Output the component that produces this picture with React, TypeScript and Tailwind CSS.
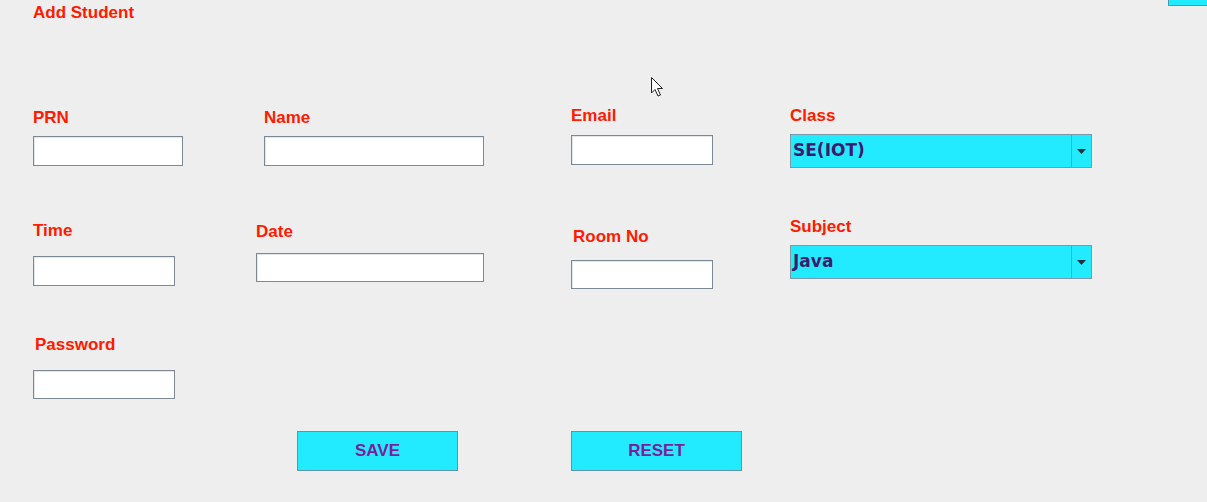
import React from "react";

function Field({
  label,
  colClass,
  labelClass,
  inputClass,
}: {
  label: string;
  colClass: string;
  labelClass: string;
  inputClass: string;
}) {
  return (
    <div className={`flex flex-col shrink-0 ${colClass}`}>
      <div className={`pt-[1px] text-[17px] leading-[20px] font-bold text-[#ff1a00] whitespace-nowrap ${labelClass}`}>{label}</div>
      <div className={`bg-white border border-[#7d8994] shadow-[inset_1px_1px_0_#e3e6e9] ${inputClass}`} />
    </div>
  );
}

function Combo({ label, value, colClass, labelClass }: { label: string; value: string; colClass: string; labelClass: string }) {
  return (
    <div className={`flex flex-col shrink-0 w-[302px] ${colClass}`}>
      <div className={`pt-[1px] text-[17px] leading-[20px] font-bold text-[#ff1a00] ${labelClass}`}>{label}</div>
      <div className="flex h-[34px] w-[302px] border border-[#7a9aa8] bg-[#22ebff]">
        <div
          className="flex-1 flex items-center pl-[2px] text-[17px] font-bold text-[#3d1a6e]"
          style={{ fontFamily: '"DejaVu Sans", Verdana, sans-serif' }}
        >
          {value}
        </div>
        <div className="w-[20px] border-l border-[#7a9aa8] flex items-center justify-center">
          <svg width="9" height="5" viewBox="0 0 9 5">
            <path d="M0 0 H9 L4.5 5 Z" fill="#233040" />
          </svg>
        </div>
      </div>
    </div>
  );
}

export default function App() {
  return (
    <div
      className="relative w-[1207px] h-[502px] overflow-hidden bg-[#eeeeee]"
      style={{ fontFamily: '"Liberation Sans", Arial, sans-serif' }}
    >
      <div className="absolute right-0 top-0 w-[39px] h-[6px] bg-[#22ebff] border-l border-b border-[#4a9ab0]" />

      <div className="pt-[3px] pl-[33px] text-[17px] leading-[20px] font-bold text-[#ff1a00]">Add Student</div>

      {/* Row 1 */}
      <div className="flex items-start mt-[82px]">
        <Field label="PRN" colClass="ml-[33px] mt-[2px] w-[150px] gap-[8px]" labelClass="" inputClass="w-[150px] h-[30px]" />
        <Field label="Name" colClass="ml-[81px] mt-[2px] w-[220px] gap-[8px]" labelClass="" inputClass="w-[220px] h-[30px]" />
        <Field label="Email" colClass="ml-[87px] mt-0 w-[142px] gap-[9px]" labelClass="" inputClass="w-[142px] h-[30px]" />
        <Combo label="Class" value="SE(IOT)" colClass="ml-[77px] gap-[8px]" labelClass="" />
      </div>

      {/* Row 2 */}
      <div className="flex items-start mt-[48px]">
        <Field label="Time" colClass="ml-[33px] mt-[4px] w-[142px] gap-[15px]" labelClass="" inputClass="w-[142px] h-[30px]" />
        <Field label="Date" colClass="ml-[81px] mt-[5px] w-[228px] gap-[11px]" labelClass="" inputClass="w-[228px] h-[29px]" />
        <Field label="Room No" colClass="ml-[87px] mt-[10px] w-[142px] gap-[13px]" labelClass="pl-[2px]" inputClass="w-[142px] h-[29px]" />
        <Combo label="Subject" value="Java" colClass="ml-[77px] gap-[8px]" labelClass="" />
      </div>

      {/* Row 3 */}
      <div className="flex items-start mt-[45px]">
        <Field label="Password" colClass="ml-[33px] w-[142px] gap-[15px]" labelClass="pl-[2px]" inputClass="w-[142px] h-[29px]" />
      </div>

      {/* Buttons */}
      <div className="flex items-start mt-[32px]">
        <button className="ml-[297px] w-[161px] h-[40px] bg-[#22ebff] border border-[#5e95a8] text-[17px] font-bold text-[#7a1ea0]">
          SAVE
        </button>
        <button className="ml-[113px] w-[171px] h-[40px] bg-[#22ebff] border border-[#5e95a8] text-[17px] font-bold text-[#7a1ea0]">
          RESET
        </button>
      </div>

      {/* mouse cursor */}
      <svg className="absolute left-[651px] top-[77px]" width="14" height="20" viewBox="0 0 14 20">
        <path d="M0.5 0.5 V16 L4 12.5 L7 19 L9.5 18 L6.5 11.5 H11.5 Z" fill="#ffffff" stroke="#222" strokeWidth="1" strokeLinejoin="round" />
      </svg>
    </div>
  );
}
